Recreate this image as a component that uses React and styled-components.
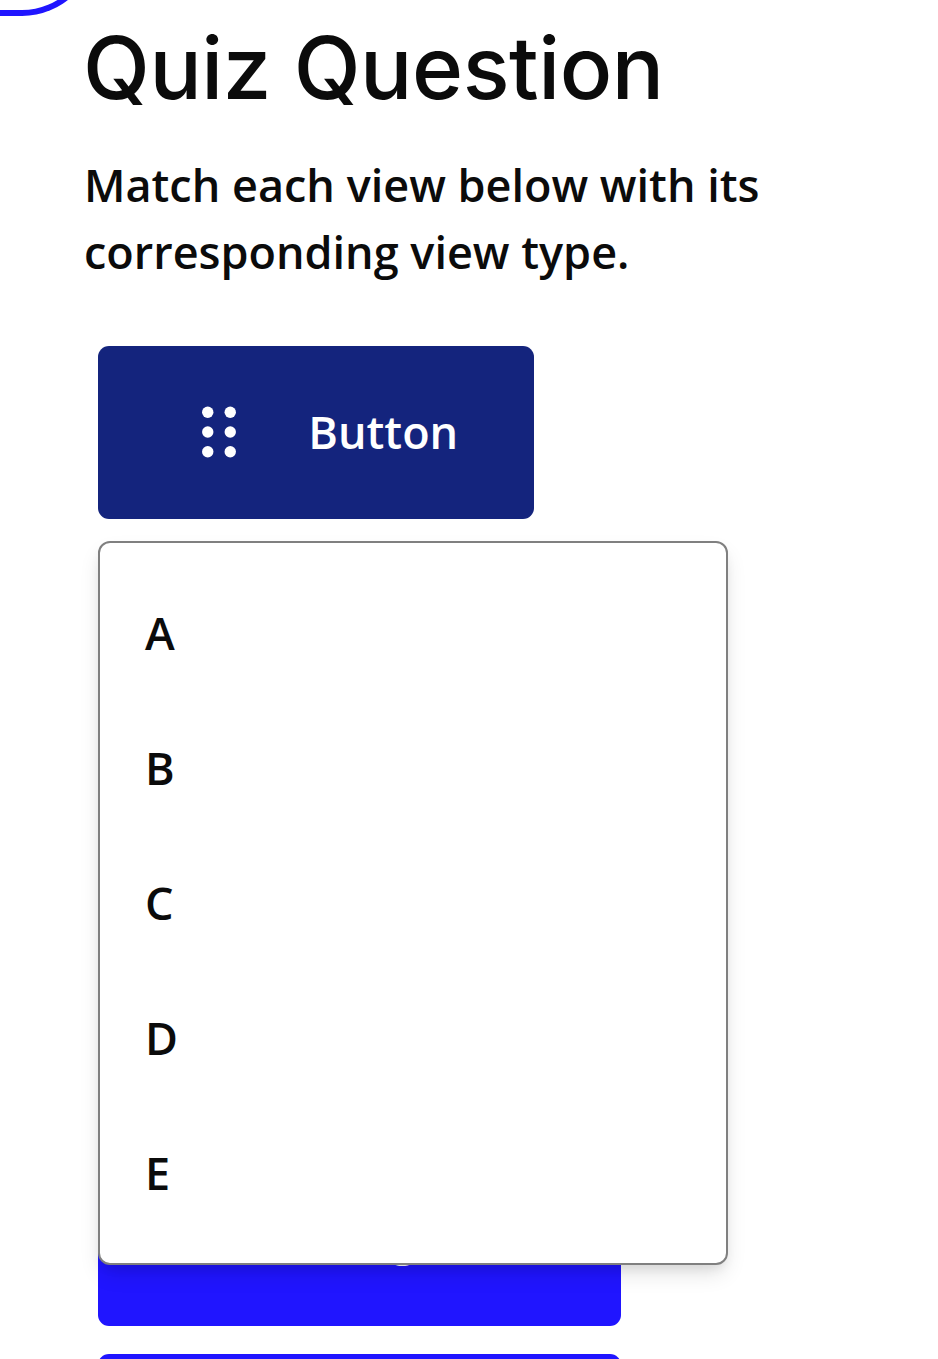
import React from 'react'
import styled, { createGlobalStyle } from 'styled-components'

const options = ['A', 'B', 'C', 'D', 'E']

const dots = [
  [5.75, 6.3], [28.25, 6.3],
  [5.75, 26], [28.25, 26],
  [5.75, 45.7], [28.25, 45.7],
]

const DragHandle = () => (
  <Handle width="34" height="52" viewBox="0 0 34 52">
    {dots.map(([x, y]) => (
      <circle key={`${x}-${y}`} cx={x} cy={y} r="5.7" fill="currentColor" />
    ))}
  </Handle>
)

const Answer = ({ label, active, wide }) => (
  <AnswerCard $active={active} $wide={wide}>
    <DragHandle />
    <span>{label}</span>
  </AnswerCard>
)

const App = () => {
  return (
    <Page>
      <GlobalStyle />
      <TopStrip>
        <OutlinedPill />
      </TopStrip>

      <Content>
        <Title>Quiz Question</Title>
        <Prompt>Match each view below with its corresponding view type.</Prompt>

        <Answers>
          <Answer label="Button" active />
          <MenuAnchor>
            <Menu role="listbox">
              {options.map((option) => (
                <MenuItem key={option} role="option">{option}</MenuItem>
              ))}
            </Menu>
          </MenuAnchor>
          <Answer label="ImageView" wide />
          <Answer wide />
        </Answers>
      </Content>
    </Page>
  )
}

const GlobalStyle = createGlobalStyle`
  * {
    box-sizing: border-box;
  }

  body {
    margin: 0;
    background: #ffffff;
    color: #0b0b0b;
    font-family: 'Open Sans', 'Noto Sans', sans-serif;
  }
`

const Page = styled.main`
  width: 938px;
  height: 1359px;
  overflow: hidden;
`

const TopStrip = styled.div`
  display: flex;
  align-items: flex-end;
  height: 16px;
  overflow: hidden;
`

const OutlinedPill = styled.div`
  flex: none;
  width: 96px;
  height: 148px;
  border: 6px solid #2015ff;
  border-top: 0;
  border-left: 0;
  border-radius: 0 0 74px 0;
`

const Content = styled.section`
  padding: 0 84px;
`

const Title = styled.h1`
  margin: 0 0 0 -1px;
  height: 135px;
  font-family: Inter, 'Liberation Sans', sans-serif;
  font-size: 87px;
  font-weight: 500;
  line-height: 104px;
  letter-spacing: -0.45px;
  white-space: nowrap;
`

const Prompt = styled.p`
  margin: 0;
  font-size: 45px;
  font-weight: 600;
  line-height: 67px;
`

const Answers = styled.div`
  display: flex;
  flex-direction: column;
  align-items: flex-start;
  padding: 61px 14px 0;
`

const AnswerCard = styled.div`
  display: flex;
  flex: none;
  align-items: center;
  gap: 72.3px;
  width: ${({ $wide }) => ($wide ? '523px' : '436px')};
  height: 173px;
  padding: 0 0 ${({ $wide }) => ($wide ? '4px' : '2px')} 104px;
  border-radius: 11px;
  background: ${({ $active }) => ($active ? '#14247d' : '#2015ff')};
  color: #ffffff;
  font-size: 45px;
  font-weight: 600;
  line-height: 67px;

  & + & {
    margin-top: 28px;
  }
`

const Handle = styled.svg`
  flex: none;
`

const MenuAnchor = styled.div`
  position: relative;
  flex: none;
  height: 634px;
`

const Menu = styled.ul`
  position: absolute;
  top: 22px;
  left: 0;
  z-index: 1;
  width: 630px;
  height: 724px;
  margin: 0;
  padding: 22px 0;
  list-style: none;
  background: #ffffff;
  border: 2px solid #808080;
  border-radius: 12px;
  box-shadow: 0 11px 22px -3px rgba(0, 0, 0, 0.12), 0 6px 11px -3px rgba(0, 0, 0, 0.08);
`

const MenuItem = styled.li`
  display: flex;
  align-items: center;
  height: 135px;
  padding: 0 45px;
  font-size: 45px;
  font-weight: 600;
`

export default App
